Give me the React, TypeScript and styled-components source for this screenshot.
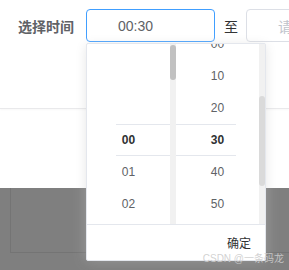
import React from "react";
import styled, { createGlobalStyle } from "styled-components";

const GlobalStyle = createGlobalStyle`
  html, body {
    margin: 0;
    padding: 0;
    background: #ffffff;
  }
  body {
    font-family: "Liberation Sans", "Noto Sans CJK SC", Arial, sans-serif;
  }
`;

const Page = styled.div`
  position: relative;
  width: 289px;
  height: 270px;
  overflow: hidden;
  display: flex;
  flex-direction: column;
`;

const Header = styled.div`
  height: 109px;
  box-sizing: border-box;
  border-bottom: 1px solid #e9e9eb;
  box-shadow: 0 1px 2px rgba(0, 0, 0, 0.03);
  padding: 9px 0 0 18px;
`;

const FormRow = styled.div`
  display: flex;
  align-items: center;
  white-space: nowrap;
`;

const Label = styled.span`
  font-size: 14px;
  font-weight: bold;
  color: #606266;
  margin-right: 12px;
`;

const Input = styled.div<{ $focused?: boolean; $placeholder?: boolean }>`
  flex-shrink: 0;
  width: 129px;
  height: 33px;
  box-sizing: border-box;
  border: 1px solid ${(p) => (p.$focused ? "#409eff" : "#dcdfe6")};
  border-radius: 4px;
  padding-left: 31px;
  display: flex;
  align-items: center;
  font-size: 14px;
  color: ${(p) => (p.$placeholder ? "#c0c4cc" : "#606266")};
`;

const Separator = styled.span`
  font-size: 14px;
  color: #303133;
  margin: 0 8px 0 9px;
`;

const Middle = styled.div`
  height: 79px;
`;

const Overlay = styled.div`
  flex: 1;
  background: #7f7f7f;
  padding: 0 0 17px 10px;
  display: flex;
`;

const Card = styled.div`
  flex: 1;
  border-left: 1px solid #747474;
  border-bottom: 1px solid #747474;
`;

const Popover = styled.div`
  position: absolute;
  top: 43px;
  left: 86px;
  width: 180px;
  box-sizing: border-box;
  background: #ffffff;
  border: 1px solid #e4e7ed;
  border-radius: 2px;
  box-shadow: 0 2px 12px rgba(0, 0, 0, 0.1), 0 0 14px rgba(255, 255, 255, 0.35);
`;

const Content = styled.div`
  position: relative;
  height: 180px;
  display: flex;
  overflow: hidden;
`;

const SelectedBand = styled.div`
  position: absolute;
  left: 29px;
  width: 120px;
  top: 80px;
  height: 30px;
  border-top: 1px solid #e4e7ed;
  border-bottom: 1px solid #e4e7ed;
  pointer-events: none;
`;

const Column = styled.div`
  position: relative;
  flex: 1;
  display: flex;
  overflow: hidden;
`;

const List = styled.ul<{ $offset: number }>`
  flex: 1;
  list-style: none;
  margin: ${(p) => p.$offset}px 0 0 0;
  padding: 0;
`;

const Item = styled.li<{ $active?: boolean }>`
  height: 32px;
  line-height: 32px;
  text-align: center;
  font-size: 12px;
  color: ${(p) => (p.$active ? "#303133" : "#606266")};
  font-weight: ${(p) => (p.$active ? "bold" : "normal")};
`;

const Track = styled.div`
  position: relative;
  width: 6px;
  flex-shrink: 0;
  background: #f1f1f1;
  z-index: 1;
`;

const Thumb = styled.div<{ $top: number; $height: number; $color: string }>`
  position: absolute;
  left: 0;
  right: 0;
  top: ${(p) => p.$top}px;
  height: ${(p) => p.$height}px;
  border-radius: 3px;
  background: ${(p) => p.$color};
`;

const Footer = styled.div`
  border-top: 1px solid #e4e7ed;
  height: 36px;
  box-sizing: border-box;
  display: flex;
  align-items: center;
  justify-content: flex-end;
  padding-right: 14px;
`;

const ConfirmButton = styled.button`
  border: none;
  background: transparent;
  padding: 0;
  font-family: inherit;
  font-size: 12px;
  color: #303133;
  cursor: pointer;
`;

const Watermark = styled.div`
  position: absolute;
  right: 5px;
  bottom: 5px;
  font-size: 10px;
  color: rgba(205, 205, 205, 0.9);
  white-space: nowrap;
`;

const hours = ["00", "01", "02"];
const minutes = ["00", "10", "20", "30", "40", "50"];

export default function App() {
  return (
    <>
      <GlobalStyle />
      <Page>
        <Header>
          <FormRow>
            <Label>选择时间</Label>
            <Input $focused>00:30</Input>
            <Separator>至</Separator>
            <Input $placeholder>请选择时间</Input>
          </FormRow>
        </Header>
        <Middle />
        <Overlay>
          <Card />
        </Overlay>

        <Popover>
          <Content>
            <SelectedBand />
            <Column>
              <List $offset={80}>
                {hours.map((h) => (
                  <Item key={h} $active={h === "00"}>
                    {h}
                  </Item>
                ))}
              </List>
              <Track>
                <Thumb $top={1} $height={35} $color="#c1c1c1" />
              </Track>
            </Column>
            <Column>
              <List $offset={-16}>
                {minutes.map((m) => (
                  <Item key={m} $active={m === "30"}>
                    {m}
                  </Item>
                ))}
              </List>
              <Track>
                <Thumb $top={52} $height={90} $color="#dadada" />
              </Track>
            </Column>
          </Content>
          <Footer>
            <ConfirmButton>确定</ConfirmButton>
          </Footer>
        </Popover>

        <Watermark>CSDN @一条码龙</Watermark>
      </Page>
    </>
  );
}
